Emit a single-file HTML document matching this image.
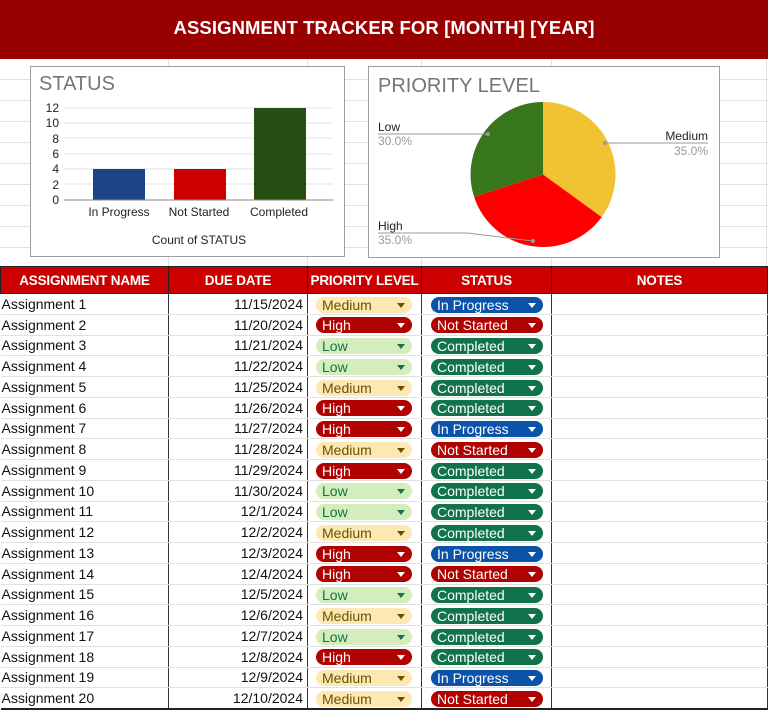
<!DOCTYPE html>
<html><head><meta charset="utf-8"><style>
*{margin:0;padding:0;box-sizing:border-box}
body{width:768px;height:711px;overflow:hidden;background:#fff;font-family:"Liberation Sans",sans-serif;position:relative}
.hdr{position:absolute;left:0;top:0;width:768px;height:59px;background:#990000;color:#fff;font-weight:bold;font-size:18.5px;text-align:center;line-height:56px;letter-spacing:0.1px}
.grid{position:absolute;left:0;top:59px;width:768px;height:207px;background:
repeating-linear-gradient(to bottom,transparent 0,transparent 20px,#e2e2e2 20px,#e2e2e2 21px);}
.vl{position:absolute;top:59px;height:207px;width:1px;background:#e2e2e2}
.box{position:absolute;background:#fff;border:1px solid #9e9e9e}
.t{position:absolute;white-space:nowrap}
table{position:absolute;left:0;top:266px;border-collapse:collapse;table-layout:fixed;width:767px}
th{background:#cc0000;color:#fff;font-size:13.5px;font-weight:bold;height:27px;border:1.5px solid #222;text-align:center;white-space:nowrap;overflow:hidden;letter-spacing:-0.2px}
td{height:20.75px;font-size:14px;color:#111;border-bottom:1px solid #e0e0e0;border-left:1.5px solid #333;border-right:1.5px solid #333;padding:0;white-space:nowrap;overflow:hidden}
td.n{border-left:none;padding-left:1px}
td.d{text-align:right;padding-right:4px}
td.p{padding-left:8px}td.s{padding-left:9px}
tr:last-child td{border-bottom:2px solid #222}
.pl{display:inline-block;height:16px;border-radius:8px;font-size:14px;line-height:16px;padding-left:6px;position:relative;vertical-align:middle}
.pl:after{content:"";position:absolute;right:7px;top:6px;border-left:4px solid transparent;border-right:4px solid transparent;border-top:5px solid currentColor}
.pr{width:96px}.st{width:112px}
.M{background:#fce8b2;color:#6b5200}.H{background:#b10202;color:#fff}.L{background:#d4edbc;color:#11734b}
.I{background:#0a53a8;color:#fff}.N{background:#b10202;color:#fff}.C{background:#11734b;color:#fff}
</style></head><body>
<div class="hdr">ASSIGNMENT TRACKER FOR [MONTH] [YEAR]</div>
<div class="grid"></div>
<div class="vl" style="left:168px"></div><div class="vl" style="left:307px"></div><div class="vl" style="left:421px"></div><div class="vl" style="left:551px"></div><div class="vl" style="left:766px"></div>

<div class="box" style="left:30px;top:66px;width:315px;height:191px"></div>
<div class="t" style="left:39px;top:73px;font-size:20px;color:#757575">STATUS</div>
<svg style="position:absolute;left:0;top:0" width="768" height="266">
<g stroke="#e0e0e0" stroke-width="1">
<line x1="64" x2="333" y1="108" y2="108"/><line x1="64" x2="333" y1="123" y2="123"/><line x1="64" x2="333" y1="138" y2="138"/><line x1="64" x2="333" y1="154" y2="154"/><line x1="64" x2="333" y1="169" y2="169"/><line x1="64" x2="333" y1="184" y2="184"/></g>
<rect x="93" y="169" width="52" height="31" fill="#1c4587"/>
<rect x="174" y="169" width="52" height="31" fill="#cc0000"/>
<rect x="254" y="108" width="52" height="92" fill="#274e13"/>
<line x1="64" x2="333" y1="200" y2="200" stroke="#888" stroke-width="1"/>
<g font-family="Liberation Sans" font-size="12" fill="#222" text-anchor="end">
<text x="59" y="112">12</text><text x="59" y="127">10</text><text x="59" y="143">8</text><text x="59" y="158">6</text><text x="59" y="173">4</text><text x="59" y="189">2</text><text x="59" y="204">0</text></g>
<g font-family="Liberation Sans" font-size="12" fill="#222" text-anchor="middle">
<text x="119" y="216">In Progress</text><text x="199" y="216">Not Started</text><text x="279" y="216">Completed</text>
<text x="199" y="244">Count of STATUS</text></g>
<rect x="368.5" y="66.5" width="351" height="191" fill="#fff" stroke="#9e9e9e"/>
<text x="378" y="92" font-family="Liberation Sans" font-size="20" fill="#757575">PRIORITY LEVEL</text>
<path d="M543 174.5 L543 102 A72.5 72.5 0 0 1 601.7 217.1 Z" fill="#f1c232"/>
<path d="M543 174.5 L601.7 217.1 A72.5 72.5 0 0 1 474.1 196.9 Z" fill="#ff0000"/>
<path d="M543 174.5 L474.1 196.9 A72.5 72.5 0 0 1 543 102 Z" fill="#38761d"/>
<g stroke="#999" stroke-width="1" fill="none">
<polyline points="378,134 488,134"/><polyline points="605,143 708,143"/><polyline points="378,233 467,233 533,241"/></g>
<g fill="#999"><circle cx="488" cy="134" r="2"/><circle cx="605" cy="143" r="2"/><circle cx="533" cy="241" r="2"/></g>
<g font-family="Liberation Sans" font-size="12">
<text x="378" y="131" fill="#222">Low</text><text x="378" y="145" fill="#999">30.0%</text>
<text x="708" y="140" fill="#222" text-anchor="end">Medium</text><text x="708" y="155" fill="#999" text-anchor="end">35.0%</text>
<text x="378" y="230" fill="#222">High</text><text x="378" y="244" fill="#999">35.0%</text></g>
</svg>

<table>
<colgroup><col style="width:168px"><col style="width:139px"><col style="width:114px"><col style="width:130px"><col style="width:216px"></colgroup>
<tr><th>ASSIGNMENT NAME</th><th>DUE DATE</th><th>PRIORITY LEVEL</th><th>STATUS</th><th>NOTES</th></tr>
<tr><td class="n">Assignment 1</td><td class="d">11/15/2024</td><td class="p"><span class="pl pr M">Medium</span></td><td class="s"><span class="pl st I">In Progress</span></td><td></td></tr>
<tr><td class="n">Assignment 2</td><td class="d">11/20/2024</td><td class="p"><span class="pl pr H">High</span></td><td class="s"><span class="pl st N">Not Started</span></td><td></td></tr>
<tr><td class="n">Assignment 3</td><td class="d">11/21/2024</td><td class="p"><span class="pl pr L">Low</span></td><td class="s"><span class="pl st C">Completed</span></td><td></td></tr>
<tr><td class="n">Assignment 4</td><td class="d">11/22/2024</td><td class="p"><span class="pl pr L">Low</span></td><td class="s"><span class="pl st C">Completed</span></td><td></td></tr>
<tr><td class="n">Assignment 5</td><td class="d">11/25/2024</td><td class="p"><span class="pl pr M">Medium</span></td><td class="s"><span class="pl st C">Completed</span></td><td></td></tr>
<tr><td class="n">Assignment 6</td><td class="d">11/26/2024</td><td class="p"><span class="pl pr H">High</span></td><td class="s"><span class="pl st C">Completed</span></td><td></td></tr>
<tr><td class="n">Assignment 7</td><td class="d">11/27/2024</td><td class="p"><span class="pl pr H">High</span></td><td class="s"><span class="pl st I">In Progress</span></td><td></td></tr>
<tr><td class="n">Assignment 8</td><td class="d">11/28/2024</td><td class="p"><span class="pl pr M">Medium</span></td><td class="s"><span class="pl st N">Not Started</span></td><td></td></tr>
<tr><td class="n">Assignment 9</td><td class="d">11/29/2024</td><td class="p"><span class="pl pr H">High</span></td><td class="s"><span class="pl st C">Completed</span></td><td></td></tr>
<tr><td class="n">Assignment 10</td><td class="d">11/30/2024</td><td class="p"><span class="pl pr L">Low</span></td><td class="s"><span class="pl st C">Completed</span></td><td></td></tr>
<tr><td class="n">Assignment 11</td><td class="d">12/1/2024</td><td class="p"><span class="pl pr L">Low</span></td><td class="s"><span class="pl st C">Completed</span></td><td></td></tr>
<tr><td class="n">Assignment 12</td><td class="d">12/2/2024</td><td class="p"><span class="pl pr M">Medium</span></td><td class="s"><span class="pl st C">Completed</span></td><td></td></tr>
<tr><td class="n">Assignment 13</td><td class="d">12/3/2024</td><td class="p"><span class="pl pr H">High</span></td><td class="s"><span class="pl st I">In Progress</span></td><td></td></tr>
<tr><td class="n">Assignment 14</td><td class="d">12/4/2024</td><td class="p"><span class="pl pr H">High</span></td><td class="s"><span class="pl st N">Not Started</span></td><td></td></tr>
<tr><td class="n">Assignment 15</td><td class="d">12/5/2024</td><td class="p"><span class="pl pr L">Low</span></td><td class="s"><span class="pl st C">Completed</span></td><td></td></tr>
<tr><td class="n">Assignment 16</td><td class="d">12/6/2024</td><td class="p"><span class="pl pr M">Medium</span></td><td class="s"><span class="pl st C">Completed</span></td><td></td></tr>
<tr><td class="n">Assignment 17</td><td class="d">12/7/2024</td><td class="p"><span class="pl pr L">Low</span></td><td class="s"><span class="pl st C">Completed</span></td><td></td></tr>
<tr><td class="n">Assignment 18</td><td class="d">12/8/2024</td><td class="p"><span class="pl pr H">High</span></td><td class="s"><span class="pl st C">Completed</span></td><td></td></tr>
<tr><td class="n">Assignment 19</td><td class="d">12/9/2024</td><td class="p"><span class="pl pr M">Medium</span></td><td class="s"><span class="pl st I">In Progress</span></td><td></td></tr>
<tr><td class="n">Assignment 20</td><td class="d">12/10/2024</td><td class="p"><span class="pl pr M">Medium</span></td><td class="s"><span class="pl st N">Not Started</span></td><td></td></tr>
</table>
</body></html>
